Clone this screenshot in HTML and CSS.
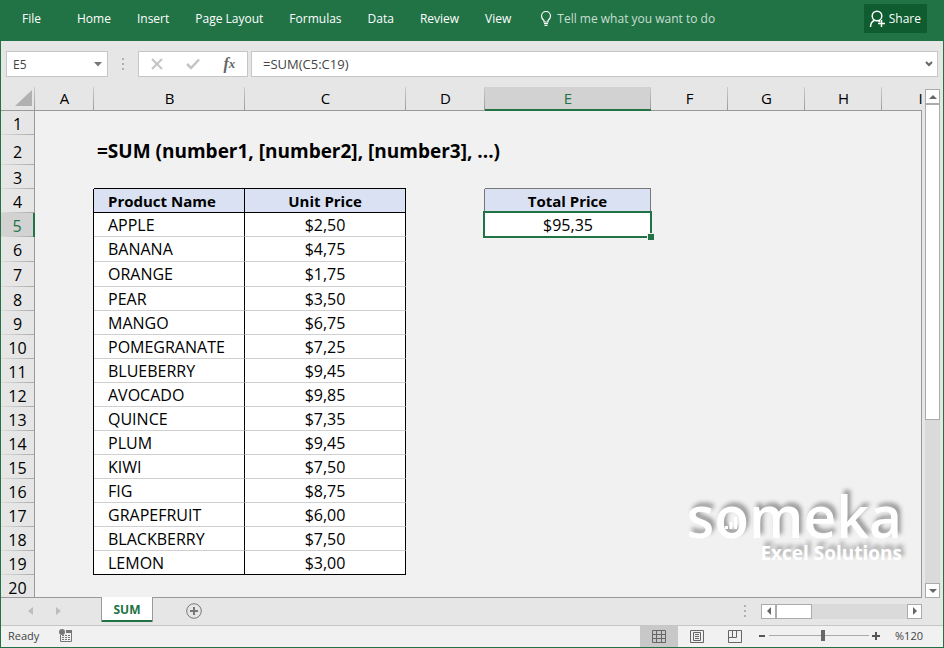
FILE: index.html
```html
<!DOCTYPE html>
<html lang="en">
<head>
    <meta charset="UTF-8">
    <meta name="viewport" content="width=device-width, initial-scale=1.0">
    <title>SUM</title>
    <link rel="stylesheet" href="styles.css">
</head>
<body>
    <header class="ribbon">
        <nav class="menu">
            <a class="menu-file" href="#">File</a>
            <a href="#">Home</a>
            <a href="#">Insert</a>
            <a href="#">Page Layout</a>
            <a href="#">Formulas</a>
            <a href="#">Data</a>
            <a href="#">Review</a>
            <a href="#">View</a>
        </nav>
        <label class="tell-me">
            <svg width="12" height="16" viewBox="0 0 12 16" fill="none" stroke="#fff" stroke-width="1.2">
                <path d="M4 11V9.500C2.500 8.300 1.500 7 1.500 5A4.500 4.500 0 0 1 10.500 5C10.500 7 9.500 8.300 8 9.500V11ZM4 12.600H8M4.500 14.500H7.500"/>
            </svg>
            <input type="text" placeholder="Tell me what you want to do" aria-label="Tell me what you want to do">
        </label>
        <button class="share-btn" type="button">
            <svg width="17" height="18" viewBox="0 0 17 18" fill="none" stroke="#fff" stroke-width="1.5">
                <circle cx="8" cy="6" r="4.800"/>
                <path d="M1.500 17C1.500 13.500 3 11.500 5.500 10.300M9.500 10.500L11 12M12.500 10V17M9 13.500H16"/>
            </svg>
            Share
        </button>
    </header>

    <div class="formula-bar">
        <div class="name-box">
            <input type="text" value="E5" aria-label="Name box">
            <button type="button" aria-label="Cell names">
                <svg width="8" height="5" viewBox="0 0 8 5"><path d="M0 0H8L4 4.500Z" fill="#777"/></svg>
            </button>
        </div>
        <span class="grip"></span>
        <div class="formula-btns">
            <button type="button" aria-label="Cancel">
                <svg width="12" height="12" viewBox="0 0 12 12"><path d="M1 1L11 11M11 1L1 11" stroke="#c4c4c4" stroke-width="2"/></svg>
            </button>
            <button type="button" aria-label="Enter">
                <svg width="14" height="12" viewBox="0 0 14 12"><path d="M1 6L5 10L13 1.500" fill="none" stroke="#c4c4c4" stroke-width="2.500"/></svg>
            </button>
            <button class="fx" type="button" aria-label="Insert function"><i>f</i><sub>x</sub></button>
        </div>
        <div class="formula-box">
            <input type="text" value="=SUM(C5:C19)" aria-label="Formula">
            <button type="button" aria-label="Expand formula bar">
                <svg width="8" height="6" viewBox="0 0 8 6"><path d="M1 1L4 4L7 1" fill="none" stroke="#666" stroke-width="2"/></svg>
            </button>
        </div>
    </div>

    <main class="workspace">
        <div class="grid">
            <table class="sheet">
                <colgroup>
                    <col class="col-num"><col class="col-a"><col class="col-b"><col class="col-c"><col class="col-d">
                    <col class="col-e"><col class="col-f"><col class="col-f"><col class="col-f"><col class="col-f">
                </colgroup>
                <thead>
                    <tr>
                        <th class="corner"><svg width="17" height="17" viewBox="0 0 17 17"><path d="M17 0V16H0Z" fill="#b1b1b1"/></svg></th>
                        <th>A</th><th>B</th><th>C</th><th>D</th><th class="active">E</th><th>F</th><th>G</th><th>H</th><th>I</th>
                    </tr>
                </thead>
                <tbody>
                    <tr><th>1</th><td colspan="9"></td></tr>
                    <tr class="row-title"><th>2</th><td></td><td class="title" colspan="8">=SUM (number1, [number2], [number3], ...)</td></tr>
                    <tr><th>3</th><td></td><td class="line-b"></td><td class="line-b"></td><td></td><td class="gray-b"></td><td colspan="4"></td></tr>
                    <tr><th>4</th><td class="line-r"></td><td class="head name">Product Name</td><td class="head">Unit Price</td><td class="gray-r"></td><td class="head head-gray">Total Price</td><td colspan="4"></td></tr>
                    <tr><th class="active">5</th><td class="line-r"></td><td class="item name">APPLE</td><td class="item">$2,50</td><td></td><td class="selected">$95,35</td><td colspan="4"></td></tr>
                    <tr class="tall"><th>6</th><td class="line-r"></td><td class="item name">BANANA</td><td class="item">$4,75</td><td colspan="6"></td></tr>
                    <tr class="tall"><th>7</th><td class="line-r"></td><td class="item name">ORANGE</td><td class="item">$1,75</td><td colspan="6"></td></tr>
                    <tr><th>8</th><td class="line-r"></td><td class="item name">PEAR</td><td class="item">$3,50</td><td colspan="6"></td></tr>
                    <tr><th>9</th><td class="line-r"></td><td class="item name">MANGO</td><td class="item">$6,75</td><td colspan="6"></td></tr>
                    <tr><th>10</th><td class="line-r"></td><td class="item name">POMEGRANATE</td><td class="item">$7,25</td><td colspan="6"></td></tr>
                    <tr><th>11</th><td class="line-r"></td><td class="item name">BLUEBERRY</td><td class="item">$9,45</td><td colspan="6"></td></tr>
                    <tr><th>12</th><td class="line-r"></td><td class="item name">AVOCADO</td><td class="item">$9,85</td><td colspan="6"></td></tr>
                    <tr><th>13</th><td class="line-r"></td><td class="item name">QUINCE</td><td class="item">$7,35</td><td colspan="6"></td></tr>
                    <tr><th>14</th><td class="line-r"></td><td class="item name">PLUM</td><td class="item">$9,45</td><td colspan="6"></td></tr>
                    <tr><th>15</th><td class="line-r"></td><td class="item name">KIWI</td><td class="item">$7,50</td><td colspan="6"></td></tr>
                    <tr><th>16</th><td class="line-r"></td><td class="item name">FIG</td><td class="item">$8,75</td><td colspan="6"></td></tr>
                    <tr><th>17</th><td class="line-r"></td><td class="item name">GRAPEFRUIT</td><td class="item">$6,00</td><td colspan="6"></td></tr>
                    <tr><th>18</th><td class="line-r"></td><td class="item name">BLACKBERRY</td><td class="item">$7,50</td><td colspan="6"></td></tr>
                    <tr><th>19</th><td class="line-r"></td><td class="item name last">LEMON</td><td class="item last">$3,00</td><td colspan="6"></td></tr>
                    <tr><th>20</th><td colspan="9"></td></tr>
                </tbody>
            </table>
            <div class="watermark">
                <div class="brand">s<span class="brand-o">o<svg width="12" height="12" viewBox="0 0 12 12" fill="#fff"><path d="M0 9H3V12H0ZM4.500 5H7.500V12H4.500ZM9 0H12V12H9Z"/></svg></span>meka</div>
                <div class="tagline">Excel Solutions</div>
            </div>
        </div>
        <div class="vscroll">
            <button type="button" aria-label="Scroll up"><svg width="8" height="4" viewBox="0 0 8 4"><path d="M4 0L8 4H0Z" fill="#666"/></svg></button>
            <div class="track"><div class="thumb"></div></div>
            <button type="button" aria-label="Scroll down"><svg width="8" height="4" viewBox="0 0 8 4"><path d="M0 0H8L4 4Z" fill="#666"/></svg></button>
        </div>
    </main>

    <div class="tabs">
        <div class="tab-nav">
            <button type="button" aria-label="Previous sheet"><svg width="5" height="8" viewBox="0 0 5 8"><path d="M5 0V8L0 4Z" fill="#bdbdbd"/></svg></button>
            <button type="button" aria-label="Next sheet"><svg width="5" height="8" viewBox="0 0 5 8"><path d="M0 0V8L5 4Z" fill="#bdbdbd"/></svg></button>
        </div>
        <button class="tab" type="button">SUM</button>
        <button class="add-tab" type="button" aria-label="New sheet">
            <svg width="16" height="16" viewBox="0 0 16 16" fill="none" stroke="#777"><circle cx="8" cy="8" r="7.300"/><path d="M8 4V12M4 8H12" stroke-width="2"/></svg>
        </button>
        <span class="grip"></span>
        <div class="hscroll">
            <button type="button" aria-label="Scroll left"><svg width="4" height="8" viewBox="0 0 4 8"><path d="M4 0V8L0 4Z" fill="#666"/></svg></button>
            <div class="track"><div class="thumb"></div></div>
            <button type="button" aria-label="Scroll right"><svg width="4" height="8" viewBox="0 0 4 8"><path d="M0 0V8L4 4Z" fill="#666"/></svg></button>
        </div>
    </div>

    <footer class="status">
        <span>Ready</span>
        <svg class="macro" width="13" height="13" viewBox="0 0 13 13">
            <path d="M7 1H13V4H7Z" fill="#777"/>
            <path d="M1.500 6V12.500H12.500V3" fill="none" stroke="#777"/>
            <path d="M3 6.500H5M6 6.500H8M9 6.500H11M3 8.500H5M6 8.500H8M9 8.500H11M3 10.500H5M6 10.500H8M9 10.500H11" stroke="#777"/>
            <circle cx="3" cy="3" r="3" fill="#777"/>
        </svg>
        <div class="views">
            <button class="on" type="button" aria-label="Normal view"><svg width="14" height="14" viewBox="0 0 14 14" fill="none" stroke="#666"><path d="M.5 .5H13.500V12.500H.5ZM.5 4.500H13.500M.5 8.500H13.500M4.500 .5V12.500M9.500 .5V12.500"/></svg></button>
            <button type="button" aria-label="Page layout view"><svg width="14" height="14" viewBox="0 0 14 14" fill="none" stroke="#666"><path d="M.5 .5H13.500V12.500H.5ZM3.500 2.500H10.500V10.500H3.500ZM5 4.500H9M5 6.500H9M5 8.500H9"/></svg></button>
            <button type="button" aria-label="Page break view"><svg width="14" height="14" viewBox="0 0 14 14" fill="none" stroke="#666"><path d="M.5 .5H13.500V12.500H.5ZM.5 7.500H8.500V.5M4.500 .5V7.500"/></svg></button>
        </div>
        <div class="zoom">
            <button type="button" aria-label="Zoom out"><svg width="8" height="8" viewBox="0 0 8 8"><path d="M1 4H7" stroke="#555" stroke-width="2"/></svg></button>
            <input type="range" min="0" max="100" value="54" aria-label="Zoom">
            <button type="button" aria-label="Zoom in"><svg width="8" height="8" viewBox="0 0 8 8"><path d="M0 4H8M4 0V8" stroke="#555" stroke-width="2"/></svg></button>
        </div>
        <span>%120</span>
    </footer>
</body>
</html>
```
FILE: styles.css
```css
* { box-sizing: border-box; }
body {
    display: flex;
    flex-direction: column;
    height: 100vh;
    margin: 0;
    overflow: hidden;
    border: 1px solid #217346;
    border-top: 0;
    background: #e6e6e6;
    color: #444;
    font-family: "Open Sans", "Noto Sans", sans-serif;
    font-size: 12px;
}
button, input {
    margin: 0;
    padding: 0;
    border: 0;
    background: none;
    color: inherit;
    font: inherit;
}
button {
    display: flex;
    align-items: center;
    justify-content: center;
}
svg { display: block; flex: none; }

/* ribbon */
.ribbon {
    display: flex;
    align-items: center;
    flex: none;
    height: 41px;
    padding: 0 16px 4px 21px;
    background: #217346;
    color: #fff;
}
.menu { display: flex; gap: 26px; }
.menu a { color: #fff; text-decoration: none; white-space: nowrap; }
.menu-file { margin-right: 10px; }
.tell-me {
    display: flex;
    align-items: center;
    flex: 1;
    gap: 5px;
    margin-left: 29px;
}
.tell-me input { flex: 1; min-width: 0; }
.tell-me input::placeholder { color: #c8dfd1; }
.share-btn {
    gap: 3px;
    height: 29px;
    padding: 0 6px 0 5px;
    background: #0e5c2f;
}

/* formula bar */
.formula-bar {
    display: flex;
    flex: none;
    height: 46px;
    padding: 10px 5px;
}
.name-box, .formula-btns, .formula-box {
    display: flex;
    align-items: center;
    border: 1px solid #c6c6c6;
    background: #fff;
}
.name-box { width: 102px; padding: 0 5px 0 6px; }
.name-box input, .formula-box input { flex: 1; min-width: 0; }
.formula-box input { font-size: 13px; }
.grip {
    align-self: center;
    width: 2px;
    height: 12px;
    background: repeating-linear-gradient(#b0b0b0 0 2px, transparent 2px 5px);
}
.formula-bar .grip { margin: 0 14px; }
.formula-btns { justify-content: space-around; width: 110px; margin-right: 3px; }
.fx {
    font-family: "Liberation Serif", serif;
    font-size: 16px;
    font-weight: bold;
    color: #666;
}
.fx sub { font-size: 13px; font-style: italic; }
.formula-box { flex: 1; padding: 0 4px 0 11px; }

/* worksheet */
.workspace { display: flex; flex: 1; min-height: 0; }
.grid {
    position: relative;
    flex: 1;
    min-width: 0;
    overflow: hidden;
    border-bottom: 1px solid #999;
    background: linear-gradient(#e6e6e6 23px, #999 23px, #999 24px, #f1f1f1 24px);
}
.grid::after {
    content: "";
    position: absolute;
    top: 23px;
    right: 0;
    bottom: 0;
    border-right: 1px solid #999;
}
.sheet {
    width: 958px;
    table-layout: fixed;
    border-collapse: separate;
    border-spacing: 0;
    color: #000;
    font-size: 16px;
    line-height: 20px;
}
.col-num { width: 34px; }
.col-a { width: 59px; }
.col-b { width: 151px; }
.col-c { width: 161px; }
.col-d { width: 79px; }
.col-e { width: 166px; }
.col-f { width: 77px; }
.sheet th, .sheet td {
    height: 24px;
    padding: 0;
    font-weight: normal;
    text-align: center;
    white-space: nowrap;
}
.sheet tbody th { padding-top: 1px; }
.sheet thead th {
    padding-bottom: 2px;
    border-bottom: 1px solid #999;
    background: linear-gradient(#ccc, #999) right / 1px 100% no-repeat #e6e6e6;
    font-size: 15px;
}
.sheet thead .active {
    padding-bottom: 1px;
    border-bottom: 2px solid #217346;
    background-color: #d2d2d2;
    color: #217346;
}
.sheet .corner svg { margin: 2px 0 0 14px; }
.sheet tbody th {
    border-right: 1px solid #999;
    background: linear-gradient(90deg, #ddd, #aaa) bottom / 100% 1px no-repeat #e6e6e6;
}
.sheet tbody .active {
    border-right: 2px solid #217346;
    background-color: #d2d2d2;
    color: #217346;
}
.sheet .row-title th { height: 30px; padding-top: 3px; }
.sheet .tall th { height: 25px; }
.sheet .title {
    padding: 2px 0 0 3px;
    font-size: 19px;
    font-weight: bold;
    text-align: left;
}
.sheet .line-r { border-right: 1px solid #000; }
.sheet .line-b { border-bottom: 1px solid #000; }
.sheet .gray-r { border-right: 1px solid #777; }
.sheet .gray-b { border-bottom: 1px solid #777; }
.sheet .head {
    padding-top: 1px;
    border-right: 1px solid #000;
    border-bottom: 1px solid #000;
    background: #d9e1f2;
    font-size: 15px;
    font-weight: bold;
}
.sheet .head-gray { border-color: #777; }
.sheet .item {
    border-right: 1px solid #000;
    border-bottom: 1px solid #d0d0d0;
    background: #fff;
}
.sheet .name { padding-left: 14px; text-align: left; }
.sheet .last { border-bottom-color: #000; }
.sheet .selected { position: relative; background: #fff; }
.selected::before {
    content: "";
    position: absolute;
    inset: -2px -1px -1px -2px;
    border: 2px solid #217346;
}
.selected::after {
    content: "";
    position: absolute;
    right: -3px;
    bottom: -3px;
    width: 6px;
    height: 6px;
    border: solid #f1f1f1;
    border-width: 1px 0 0 1px;
    background: #217346;
}

/* logo over the cells */
.watermark {
    position: absolute;
    right: 20px;
    bottom: 34px;
    color: #fff;
    font-weight: 600;
    text-align: right;
    text-shadow: 3px -4px 4px #999;
}
.brand { font-size: 57px; line-height: 54px; }
.brand-o { position: relative; }
.brand-o svg { position: absolute; left: 11px; bottom: 26px; }
.tagline { font-size: 19px; font-weight: bold; line-height: 20px; }

/* scroll bars */
.vscroll {
    display: flex;
    flex-direction: column;
    width: 15px;
    margin: 2px 3px 0;
}
.hscroll { display: flex; width: 161px; height: 15px; }
.vscroll button, .hscroll button {
    flex: none;
    width: 15px;
    height: 15px;
    border: 1px solid #ababab;
    background: #fff;
}
.track { flex: 1; background: #dadada; }
.thumb { border: 1px solid #ababab; background: #fff; }
.vscroll .thumb { height: 66%; }
.hscroll .thumb { width: 36px; height: 15px; }

/* sheet tabs */
.tabs {
    display: flex;
    align-items: center;
    flex: none;
    height: 27px;
    padding: 0 21px 1px 0;
}
.tab-nav { display: flex; gap: 23px; width: 100px; padding-left: 27px; }
.tab {
    align-self: flex-start;
    width: 52px;
    height: 25px;
    margin-top: -1px;
    position: relative;
    border: solid #999;
    border-width: 0 1px;
    background: #fff;
    box-shadow: inset 0 -2px #217346;
    color: #217346;
    font-weight: bold;
}
.add-tab { margin-left: 33px; }
.tabs .grip { margin: 0 15px 0 auto; }

/* status bar */
.status {
    display: flex;
    align-items: center;
    flex: none;
    height: 22px;
    padding: 0 20px 2px 7px;
    border-top: 1px solid #c6c6c6;
    background: #f1f1f1;
    font-size: 11px;
}
.macro { margin-left: 20px; }
.views { display: flex; align-self: stretch; margin: 0 0 -2px auto; }
.views button { width: 38px; }
.views .on { background: #c8c8c8; }
.zoom { display: flex; align-items: center; gap: 3px; margin: 0 15px 0 4px; }
.zoom input {
    width: 100px;
    height: 12px;
    appearance: none;
    background: linear-gradient(#aaa, #aaa) center / 100% 1px no-repeat;
}
.zoom input::-webkit-slider-thumb {
    appearance: none;
    width: 4px;
    height: 11px;
    background: #666;
}
```
